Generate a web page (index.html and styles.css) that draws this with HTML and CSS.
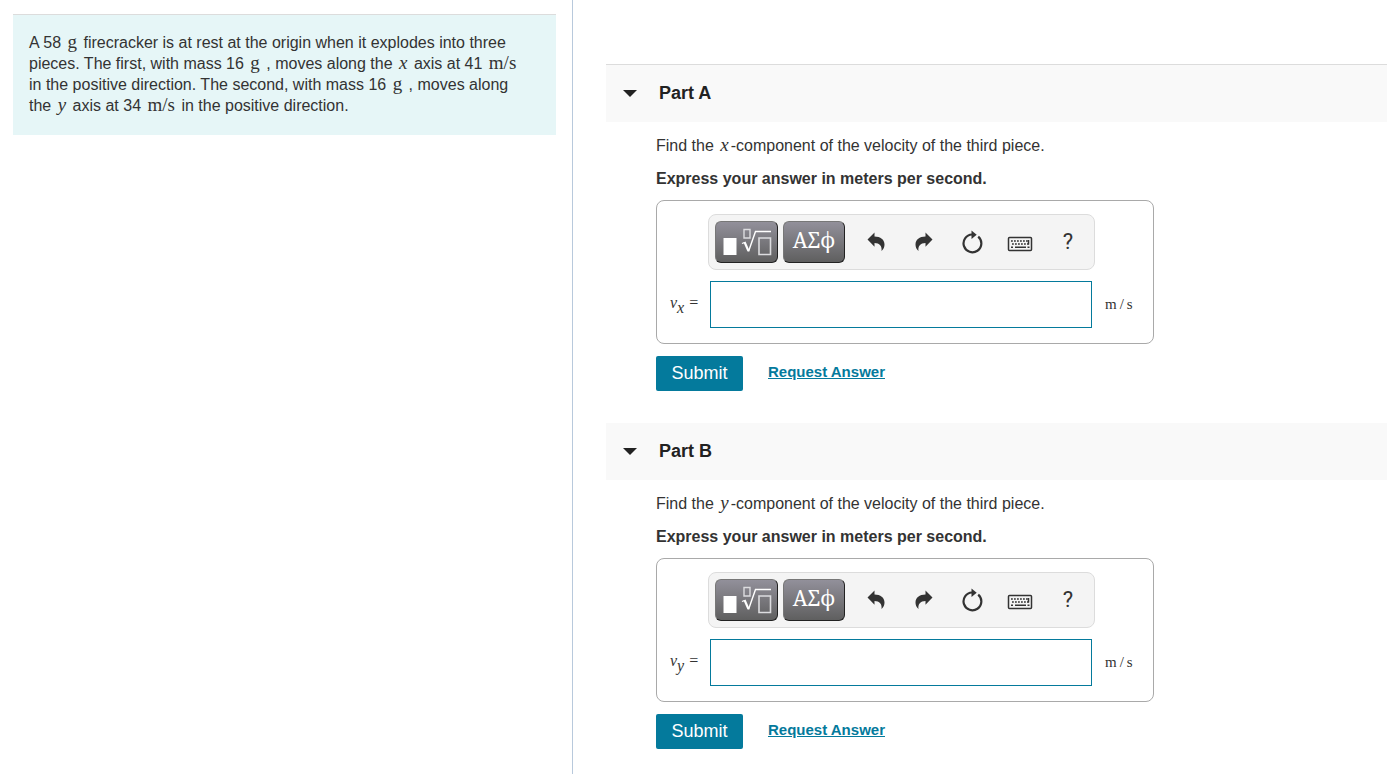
FILE: index.html
```html
<!DOCTYPE html>
<html lang="en">
<head>
<meta charset="utf-8">
<title>Velocity of the third piece</title>
<link rel="stylesheet" href="styles.css">
</head>
<body>
<svg class="sprite" aria-hidden="true">
  <symbol id="i-template" viewBox="0 0 50 28">
    <path d="M1.500 10h13v17h-13z" fill="#fff"/>
    <path d="M22 1.500h6v8.500h-6z" fill="none" stroke="#dcdcdf" stroke-width="1.400"/>
    <path d="M20 15.500l2.500-1" fill="none" stroke="#fff" stroke-width="1.200"/>
    <path d="M22.500 14l4 9" fill="none" stroke="#fff" stroke-width="2.200"/>
    <path d="M26.500 23.500L33.500 3.500H49" fill="none" stroke="#fff" stroke-width="1.400"/>
    <path d="M37 10h11.500v16.500H37z" fill="none" stroke="#dcdcdf" stroke-width="1.600"/>
  </symbol>
  <symbol id="i-undo" viewBox="0 0 18 20">
    <path d="M0.500 7.500L7.500 0.500v4c6 0 10 3 10 8 0 2.500-.8 4.500-3 6.500 .8-5-2-8-7-8v3.800z" fill="#333"/>
  </symbol>
  <symbol id="i-reset" viewBox="0 0 22 24">
    <path d="M17.200 6.600A8.900 8.900 0 1 1 11 4.500" fill="none" stroke="#333" stroke-width="2.200"/>
    <path d="M10.500 0.500v8.500l5.200-4.200z" fill="#333"/>
  </symbol>
  <symbol id="i-keyboard" viewBox="0 0 26 16">
    <rect x="1.500" y="1.500" width="23" height="13" rx="1" fill="none" stroke="#333" stroke-width="1.500"/>
    <path d="M4 5h18M5 8h17" fill="none" stroke="#333" stroke-width="1.600" stroke-dasharray="1.800 1.200"/>
    <path d="M4 11.300h2M8 11.300h11M20.500 11.300h2M21.500 4v4.500" fill="none" stroke="#333" stroke-width="1.500"/>
  </symbol>
</svg>
<div class="page">
  <aside class="side">
    <p class="problem">A 58 <span class="math">g</span> firecracker is at rest at the origin when it explodes into three<br>
      pieces. The first, with mass 16 <span class="math">g</span> , moves along the <i class="math">x</i> axis at 41 <span class="math">m/s</span><br>
      in the positive direction. The second, with mass 16 <span class="math">g</span> , moves along<br>
      the <i class="math">y</i> axis at 34 <span class="math">m/s</span> in the positive direction.</p>
  </aside>
  <main class="parts">
    <section class="part">
      <h2 class="part-head part-head-first"><button class="toggle" type="button"><span class="caret"></span>Part A</button></h2>
      <form class="part-body">
        <p class="question">Find the <i class="math">x</i>-component of the velocity of the third piece.</p>
        <p class="instruction">Express your answer in meters per second.</p>
        <div class="answer">
          <div class="toolbar">
            <button class="key" type="button" aria-label="Templates"><svg class="template"><use href="#i-template"/></svg></button>
            <button class="key key-greek" type="button">ΑΣϕ</button>
            <button class="tool" type="button" aria-label="Undo"><svg class="arrow"><use href="#i-undo"/></svg></button>
            <button class="tool" type="button" aria-label="Redo"><svg class="arrow flip"><use href="#i-undo"/></svg></button>
            <button class="tool" type="button" aria-label="Reset"><svg class="reset"><use href="#i-reset"/></svg></button>
            <button class="tool" type="button" aria-label="Keyboard shortcuts"><svg class="keyboard"><use href="#i-keyboard"/></svg></button>
            <button class="tool" type="button">?</button>
          </div>
          <div class="entry">
            <label class="symbol" for="vx"><i>v</i><sub><i>x</i></sub> =</label>
            <input class="field" id="vx" type="text">
            <span class="unit">m<span class="unit-slash">/</span>s</span>
          </div>
        </div>
        <div class="actions">
          <button class="submit" type="button">Submit</button>
          <a class="request" href="#">Request Answer</a>
        </div>
      </form>
    </section>
    <section class="part">
      <h2 class="part-head"><button class="toggle" type="button"><span class="caret"></span>Part B</button></h2>
      <form class="part-body">
        <p class="question">Find the <i class="math">y</i>-component of the velocity of the third piece.</p>
        <p class="instruction">Express your answer in meters per second.</p>
        <div class="answer">
          <div class="toolbar">
            <button class="key" type="button" aria-label="Templates"><svg class="template"><use href="#i-template"/></svg></button>
            <button class="key key-greek" type="button">ΑΣϕ</button>
            <button class="tool" type="button" aria-label="Undo"><svg class="arrow"><use href="#i-undo"/></svg></button>
            <button class="tool" type="button" aria-label="Redo"><svg class="arrow flip"><use href="#i-undo"/></svg></button>
            <button class="tool" type="button" aria-label="Reset"><svg class="reset"><use href="#i-reset"/></svg></button>
            <button class="tool" type="button" aria-label="Keyboard shortcuts"><svg class="keyboard"><use href="#i-keyboard"/></svg></button>
            <button class="tool" type="button">?</button>
          </div>
          <div class="entry">
            <label class="symbol" for="vy"><i>v</i><sub><i>y</i></sub> =</label>
            <input class="field" id="vy" type="text">
            <span class="unit">m<span class="unit-slash">/</span>s</span>
          </div>
        </div>
        <div class="actions">
          <button class="submit" type="button">Submit</button>
          <a class="request" href="#">Request Answer</a>
        </div>
      </form>
    </section>
  </main>
</div>
</body>
</html>
```
FILE: styles.css
```css
* { box-sizing: border-box; }
body {
  margin: 0;
  background: #fff;
  color: #333;
  font-family: "Liberation Sans", Arial, sans-serif;
  font-size: 16px;
}
button { font: inherit; color: inherit; margin: 0; padding: 0; border: 0; background: none; cursor: pointer; }
.sprite { display: none; }
.page { display: grid; grid-template-columns: 573px 1fr; min-height: 100vh; }
.side { padding: 14px 16px 14px 13px; border-right: 1px solid #b8c9dc; }
.problem {
  margin: 0;
  padding: 17px 16px 19px;
  border-top: 1px solid #dcdcdc;
  background: #e6f6f7;
  line-height: 21px;
}
.math { margin: 0 2px; font-family: "Liberation Serif", "Times New Roman", serif; font-size: 19px; line-height: 16px; }
.parts { padding: 64px 0 0 33px; min-width: 0; }
.part { margin-bottom: 32px; }
.part-head { margin: 0; height: 57px; background: #f9f9f9; font-size: 18px; color: #222; }
.part-head-first { height: 58px; border-top: 1px solid #dcdcdc; }
.toggle { display: flex; align-items: center; gap: 22px; width: 100%; height: 100%; padding-left: 17px; font-weight: bold; }
.caret { border: 7px solid transparent; border-top-color: #222; border-bottom: 0; }
.part-body { padding: 13px 0 0 50px; }
.question, .instruction { margin: 0; line-height: 21px; }
.instruction { margin-top: 12px; font-weight: bold; }
.answer {
  max-width: 498px;
  margin-top: 11px;
  padding: 13px 13px 15px;
  border: 1px solid #a9a9a9;
  border-radius: 8px;
}
.toolbar {
  display: flex;
  align-items: center;
  width: 387px;
  height: 56px;
  margin-left: 38px;
  padding-left: 6px;
  border: 1px solid #dcdcdc;
  border-radius: 8px;
  background: #f4f4f4;
}
.key {
  display: flex;
  align-items: center;
  justify-content: center;
  width: 63px;
  height: 42px;
  margin-right: 5px;
  border: 1px solid #222;
  border-top-color: #777;
  border-left-color: #777;
  border-radius: 6px;
  background: linear-gradient(#92909a, #5f5f5f);
  color: #fff;
}
.key-greek { width: 62px; margin-right: 7px; padding-bottom: 4px; font-family: "Noto Serif", "DejaVu Serif", "Liberation Serif", serif; font-size: 21px; }
.tool { display: flex; align-items: center; justify-content: center; width: 48px; height: 42px; padding-bottom: 1px; font-family: Roboto, sans-serif; font-size: 22px; }
.template { width: 50px; height: 28px; }
.arrow { width: 18px; height: 20px; }
.flip { transform: scaleX(-1); }
.reset { width: 22px; height: 24px; }
.keyboard { width: 26px; height: 16px; margin-top: 5px; }
.entry { display: flex; align-items: center; margin-top: 11px; }
.symbol { width: 40px; font-family: "Liberation Serif", "Times New Roman", serif; font-size: 16px; white-space: nowrap; }
.symbol sub { margin-right: 1px; font-size: 16px; line-height: 1; vertical-align: -5px; }
.field { flex: 1; min-width: 0; height: 47px; border: 1px solid #047a9c; border-radius: 0; background: #fff; padding: 0 8px; font-size: 18px; }
.unit { width: 48px; padding-left: 13px; font-family: "Liberation Serif", "Times New Roman", serif; font-size: 15px; white-space: nowrap; }
.unit-slash { margin: 0 3px; }
.actions { display: flex; align-items: center; gap: 25px; margin-top: 12px; }
.submit { width: 87px; height: 35px; border-radius: 2px; background: #047a9c; color: #fff; font-size: 18px; }
.request { color: #047a9c; font-size: 15px; font-weight: bold; line-height: 18px; margin-bottom: 3px; }
```
